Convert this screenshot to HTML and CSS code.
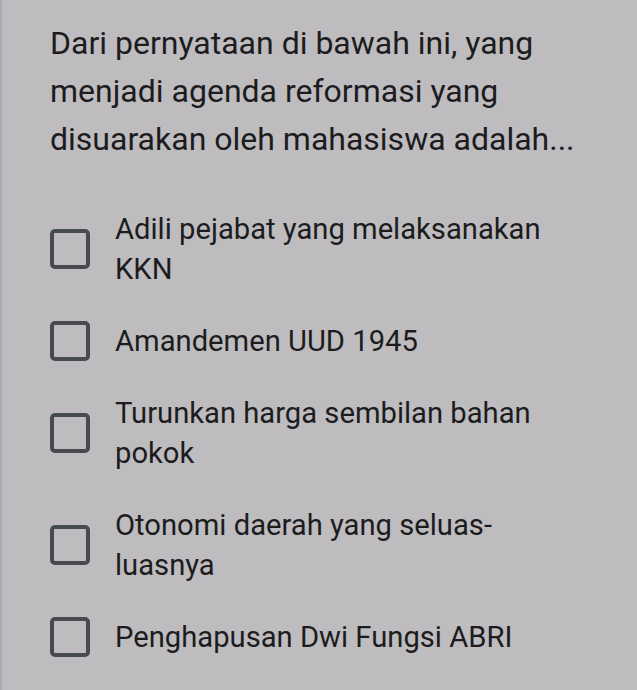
FILE: index.html
```html
<!DOCTYPE html>
<html>
<head>
<meta charset="utf-8">
<link rel="stylesheet" href="styles.css">
</head>
<body>
<div class="page">
  <p class="question">Dari pernyataan di bawah ini, yang menjadi agenda reformasi yang disuarakan oleh mahasiswa adalah...</p>
  <ul class="options">
    <li class="option"><span class="box"></span><span class="label">Adili pejabat yang melaksanakan KKN</span></li>
    <li class="option"><span class="box"></span><span class="label">Amandemen UUD 1945</span></li>
    <li class="option"><span class="box"></span><span class="label">Turunkan harga sembilan bahan pokok</span></li>
    <li class="option"><span class="box"></span><span class="label">Otonomi daerah yang seluas-luasnya</span></li>
    <li class="option"><span class="box"></span><span class="label">Penghapusan Dwi Fungsi ABRI</span></li>
  </ul>
</div>
</body>
</html>
```
FILE: styles.css
```css
html, body {
  margin: 0;
  padding: 0;
  height: 100%;
}
body {
  background: #bebcbf;
  font-family: Roboto, "Liberation Sans", sans-serif;
  color: #1c1c1e;
}
.page {
  min-height: 100%;
  box-sizing: border-box;
  border-left: 2px solid #a8abb0;
  padding: 19px 40px 0 48px;
}
.question {
  margin: 0;
  font-size: 32px;
  line-height: 48px;
  max-width: 530px;
}
.options {
  list-style: none;
  margin: 46px 0 0 0;
  padding: 0;
  display: flex;
  flex-direction: column;
  gap: 32px;
}
.option {
  display: flex;
  align-items: center;
  gap: 25px;
}
.box {
  flex: none;
  width: 32px;
  height: 32px;
  border: 4px solid #464b4d;
  border-radius: 5px;
}
.label {
  font-size: 29.2px;
  line-height: 40px;
  max-width: 460px;
}
```
